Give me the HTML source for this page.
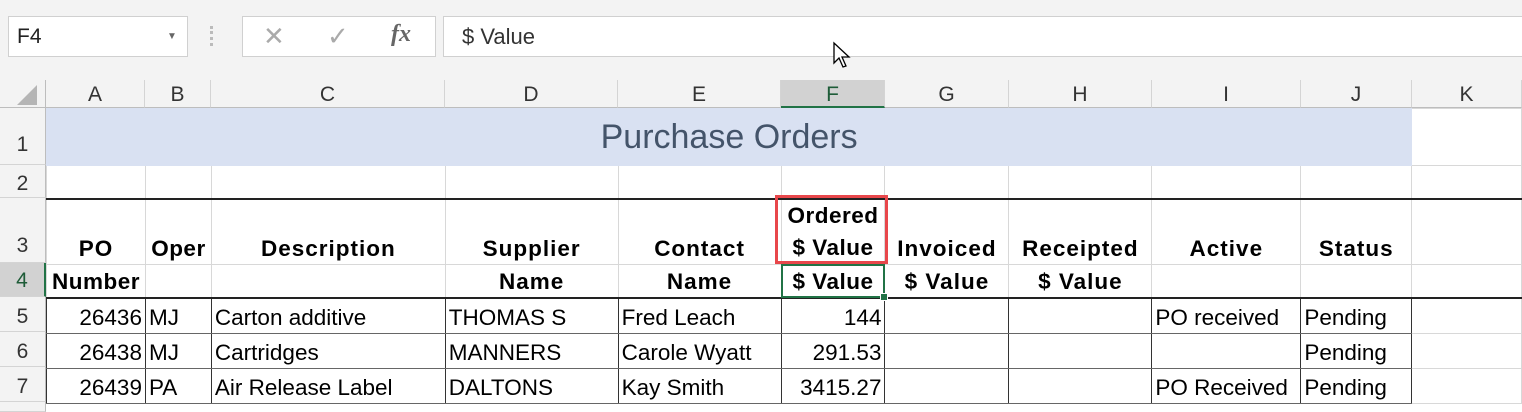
<!DOCTYPE html><html><head><meta charset="utf-8"><style>
body{margin:0;width:1522px;height:405px;overflow:hidden;background:#fff;font-family:"Liberation Sans",Arial,sans-serif;position:relative}
.top{position:absolute;left:0;top:0;width:1522px;height:80px;background:#f3f3f3}
.box{position:absolute;background:#fff;border:1px solid #d0d0d0;box-sizing:border-box}
.ch{position:absolute;top:80px;height:28px;background:#f3f3f3;border-right:1px solid #d4d4d4;box-sizing:border-box;text-align:center;font-size:21px;color:#333;line-height:30px;border-bottom:1px solid #bdbdbd}
.rh{position:absolute;left:0;width:46px;background:#f3f3f3;border-bottom:1px solid #d4d4d4;border-right:1px solid #bdbdbd;box-sizing:border-box;text-align:center;font-size:21px;color:#333}
table{position:absolute;left:46px;top:108px;border-collapse:collapse;table-layout:fixed}
td{border:1px solid #d8d8d8;padding:0 3px;font-size:22.5px;white-space:nowrap;overflow:hidden;vertical-align:bottom;line-height:30px;color:#000}
.b{font-weight:bold;text-align:center;letter-spacing:1px}
.r{text-align:right}
tr.d td{border-left:1.5px solid #333;border-right:1.5px solid #333;border-bottom:1px solid #666}
</style></head><body>
<div class="top"></div>
<div class="box" style="left:8px;top:16px;width:180px;height:41px;font-size:21px;line-height:40px;padding-left:8px;color:#222">F4<span style="position:absolute;left:158px;top:0;font-size:10px;color:#666">▼</span></div>
<div style="position:absolute;left:210px;top:26px;width:3px;height:20px;border-left:3px dotted #bbb"></div>
<div class="box" style="left:242px;top:16px;width:194px;height:41px">
<span style="position:absolute;left:20px;top:4px;font-size:26px;color:#aaa">✕</span>
<span style="position:absolute;left:84px;top:4px;font-size:26px;color:#aaa">✓</span>
<span style="position:absolute;left:148px;top:4px;font-size:24px;color:#666;font-style:italic;font-family:'Liberation Serif',serif;font-weight:bold">fx</span></div>
<div class="box" style="left:443px;top:16px;width:1090px;height:41px;font-size:22px;line-height:40px;padding-left:18px;color:#333">$ Value</div>
<svg style="position:absolute;left:832px;top:41px" width="20" height="28"><path d="M2 2 L2 22 L7 17 L11 26 L14 25 L10 16 L17 16 Z" fill="#fff" stroke="#000" stroke-width="1.3"/></svg>
<div style="position:absolute;left:0;top:80px;width:46px;height:28px;background:#f3f3f3;border-right:1px solid #bdbdbd;border-bottom:1px solid #bdbdbd;box-sizing:border-box"><svg width="46" height="28"><path d="M17 25 L37 25 L37 5 Z" fill="#b5b5b5"/></svg></div>
<div class="ch" style="left:46px;width:99px">A</div>
<div class="ch" style="left:145px;width:66px">B</div>
<div class="ch" style="left:211px;width:234px">C</div>
<div class="ch" style="left:445px;width:173px">D</div>
<div class="ch" style="left:618px;width:163px">E</div>
<div class="ch" style="left:781px;width:104px;background:#d2d2d2;border-bottom:2px solid #217346;color:#1e5c38">F</div>
<div class="ch" style="left:885px;width:124px">G</div>
<div class="ch" style="left:1009px;width:143px">H</div>
<div class="ch" style="left:1152px;width:149px">I</div>
<div class="ch" style="left:1301px;width:111px">J</div>
<div class="ch" style="left:1412px;width:110px">K</div>
<div class="rh" style="top:108px;height:57px;line-height:74px">1</div>
<div class="rh" style="top:165px;height:33px;line-height:38px">2</div>
<div class="rh" style="top:198px;height:65px;line-height:96px">3</div>
<div class="rh" style="top:263px;height:34px;line-height:36px;background:#d2d2d2;border-right:2px solid #217346;color:#1e5c38">4</div>
<div class="rh" style="top:297px;height:35px;line-height:40px">5</div>
<div class="rh" style="top:332px;height:35px;line-height:40px">6</div>
<div class="rh" style="top:367px;height:35px;line-height:40px">7</div>
<div class="rh" style="top:402px;height:10px"></div>
<table>
<colgroup><col style="width:99px"><col style="width:66px"><col style="width:234px"><col style="width:173px"><col style="width:163px"><col style="width:104px"><col style="width:124px"><col style="width:143px"><col style="width:149px"><col style="width:111px"><col style="width:110px"></colgroup>
<tr style="height:57px"><td colspan="10" style="background:#d9e1f2;border-color:#d9e1f2;text-align:center;font-size:34px;color:#44546a;line-height:44px;vertical-align:middle">Purchase Orders</td><td></td></tr>
<tr style="height:33px"><td></td><td></td><td></td><td></td><td></td><td></td><td></td><td></td><td></td><td></td><td></td></tr>
<tr style="height:65px;border-top:2px solid #222"><td class="b">PO</td><td class="b" style="letter-spacing:0.5px;padding:0">Oper</td><td class="b">Description</td><td class="b">Supplier</td><td class="b">Contact</td><td class="b" style="line-height:32px;white-space:normal;padding:0;letter-spacing:0.5px">Ordered<br>$ Value</td><td class="b">Invoiced</td><td class="b">Receipted</td><td class="b">Active</td><td class="b">Status</td><td style="border-top:1px solid #d8d8d8"></td></tr>
<tr style="height:34px;border-bottom:2px solid #222"><td class="b" style="padding:0;letter-spacing:0.5px">Number</td><td></td><td></td><td class="b">Name</td><td class="b">Name</td><td class="b" style="outline:2px solid #217346;outline-offset:-2px;padding:0;letter-spacing:0.5px">$ Value</td><td class="b">$ Value</td><td class="b">$ Value</td><td></td><td></td><td style="border-bottom:1px solid #d8d8d8"></td></tr>
<tr class="d" style="height:35px"><td class="r">26436</td><td>MJ</td><td>Carton additive</td><td>THOMAS S</td><td>Fred Leach</td><td class="r">144</td><td></td><td></td><td>PO received</td><td>Pending</td><td style="border:1px solid #d8d8d8"></td></tr>
<tr class="d" style="height:35px"><td class="r">26438</td><td>MJ</td><td>Cartridges</td><td>MANNERS</td><td>Carole Wyatt</td><td class="r">291.53</td><td></td><td></td><td></td><td>Pending</td><td style="border:1px solid #d8d8d8"></td></tr>
<tr class="d" style="height:35px"><td class="r">26439</td><td>PA</td><td>Air Release Label</td><td>DALTONS</td><td>Kay Smith</td><td class="r">3415.27</td><td></td><td></td><td>PO Received</td><td>Pending</td><td style="border:1px solid #d8d8d8"></td></tr>
</table>
<div style="position:absolute;left:775px;top:195px;width:113px;height:69px;border:3px solid #e8474b;box-sizing:border-box"></div>
<div style="position:absolute;left:880px;top:293px;width:6px;height:6px;background:#217346;border:1px solid #fff"></div>
</body></html>
